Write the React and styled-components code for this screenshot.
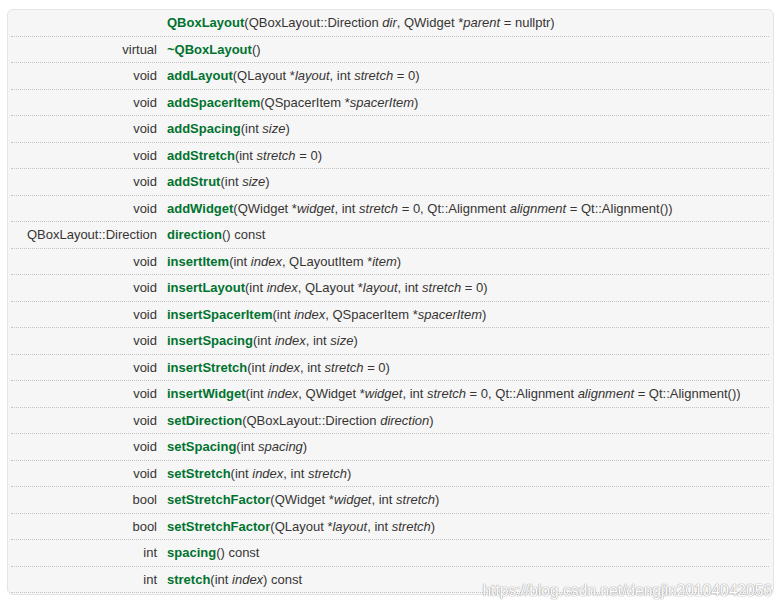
import React from "react";
import styled, { createGlobalStyle } from "styled-components";

const Global = createGlobalStyle`
  html, body { margin: 0; padding: 0; background: #ffffff; }
  body { font-family: "Liberation Sans", Arial, sans-serif; }
`;

const Page = styled.div`
  position: relative;
  width: 781px;
  height: 609px;
  padding: 9px 0 0 7px;
  box-sizing: border-box;
`;

const Table = styled.div`
  width: 767px;
  box-sizing: border-box;
  background: #f6f6f6;
  border: 1px solid #e4e4e4;
  border-radius: 6px;
  padding: 0 0 1px 0;
`;

const Row = styled.div`
  display: flex;
  align-items: center;
  height: 25.5px;
  margin: 0 4px 0 3px;
  border-bottom: 1px dotted #c4c4c4;
  font-size: 13px;
  color: #363534;
  white-space: nowrap;
`;

const TypeCell = styled.div`
  width: 146px;
  flex: none;
  text-align: right;
`;

const SigCell = styled.div`
  padding-left: 10px;
`;

const Name = styled.span`
  font-weight: bold;
  color: #00732f;
`;

const Param = styled.i`
  font-style: italic;
`;

const Watermark = styled.div`
  position: absolute;
  right: 9px;
  bottom: 9px;
  font-family: "Liberation Sans", Arial, sans-serif;
  font-size: 15.6px;
  color: #ffffff;
  text-shadow: 0 0 1px #a8a8a8, 0 0 1px #a8a8a8, 0 0 1px #a8a8a8;
`;

const rows = [
  ["", "QBoxLayout", "(QBoxLayout::Direction _dir_, QWidget *_parent_ = nullptr)"],
  ["virtual", "~QBoxLayout", "()"],
  ["void", "addLayout", "(QLayout *_layout_, int _stretch_ = 0)"],
  ["void", "addSpacerItem", "(QSpacerItem *_spacerItem_)"],
  ["void", "addSpacing", "(int _size_)"],
  ["void", "addStretch", "(int _stretch_ = 0)"],
  ["void", "addStrut", "(int _size_)"],
  ["void", "addWidget", "(QWidget *_widget_, int _stretch_ = 0, Qt::Alignment _alignment_ = Qt::Alignment())"],
  ["QBoxLayout::Direction", "direction", "() const"],
  ["void", "insertItem", "(int _index_, QLayoutItem *_item_)"],
  ["void", "insertLayout", "(int _index_, QLayout *_layout_, int _stretch_ = 0)"],
  ["void", "insertSpacerItem", "(int _index_, QSpacerItem *_spacerItem_)"],
  ["void", "insertSpacing", "(int _index_, int _size_)"],
  ["void", "insertStretch", "(int _index_, int _stretch_ = 0)"],
  ["void", "insertWidget", "(int _index_, QWidget *_widget_, int _stretch_ = 0, Qt::Alignment _alignment_ = Qt::Alignment())"],
  ["void", "setDirection", "(QBoxLayout::Direction _direction_)"],
  ["void", "setSpacing", "(int _spacing_)"],
  ["void", "setStretch", "(int _index_, int _stretch_)"],
  ["bool", "setStretchFactor", "(QWidget *_widget_, int _stretch_)"],
  ["bool", "setStretchFactor", "(QLayout *_layout_, int _stretch_)"],
  ["int", "spacing", "() const"],
  ["int", "stretch", "(int _index_) const"],
];

function renderSig(sig) {
  return sig.split("_").map((part, i) =>
    i % 2 === 1 ? <Param key={i}>{part}</Param> : <React.Fragment key={i}>{part}</React.Fragment>
  );
}

export default function App() {
  return (
    <>
      <Global />
      <Page>
        <Table>
          {rows.map(([type, name, sig], i) => (
            <Row key={i}>
              <TypeCell>{type}</TypeCell>
              <SigCell>
                <Name>{name}</Name>
                {renderSig(sig)}
              </SigCell>
            </Row>
          ))}
        </Table>
        <Watermark>https://blog.csdn.net/dengjin20104042056</Watermark>
      </Page>
    </>
  );
}
